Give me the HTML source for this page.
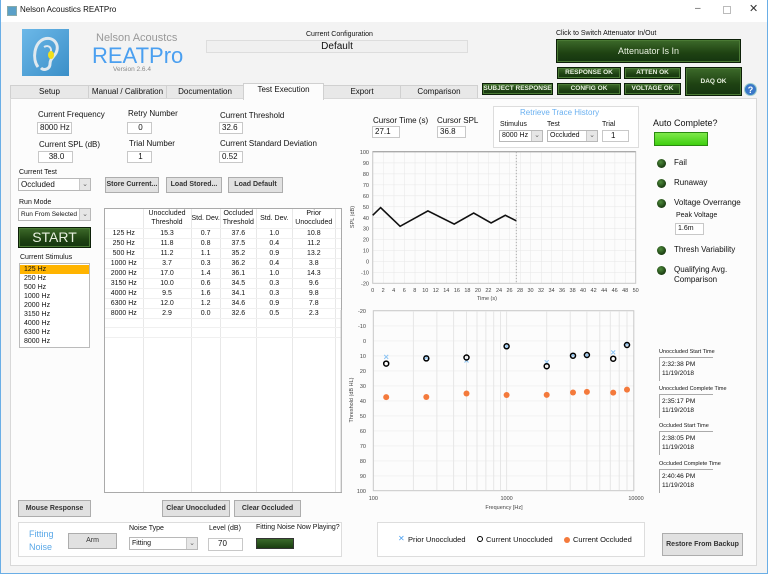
<!DOCTYPE html>
<html><head><meta charset="utf-8"><style>
*{margin:0;padding:0;box-sizing:border-box}
body{width:768px;height:574px;overflow:hidden;background:#f3f3f3;font-family:"Liberation Sans",sans-serif;color:#111;position:relative}
.a{position:absolute;white-space:nowrap}
.l{font-size:8px}
.box{position:absolute;background:#fff;border:1px solid #c8c8c8;font-size:8px;padding-left:2px;line-height:10px}
.btn{position:absolute;background:#e1e1e1;border:1px solid #adadad;font-size:7px;font-weight:bold;color:#333;text-align:center}
.gb{position:absolute;background:linear-gradient(#3d6a2a,#1e4212 60%,#153510);border:1px solid #0c1f08;color:#e8f0e0;font-size:6.5px;font-weight:bold;text-align:center;box-shadow:inset 0 0 0 1px #4a7a35}
.sel{position:absolute;background:#fff;border:1px solid #b8b8b8;font-size:8px;padding-left:2px;overflow:hidden}
.sel:after{content:"⌄";position:absolute;right:0;top:0;width:10px;height:100%;background:#e6e6e6;border-left:1px solid #c8c8c8;font-size:7px;text-align:center;color:#666}
.tab{position:absolute;top:85px;height:14px;background:#e8e8e8;border:1px solid #d0d0d0;font-size:8px;text-align:center;line-height:12px}
.led{position:absolute;width:9px;height:9px;border-radius:50%;background:radial-gradient(circle at 40% 35%,#4d8a3a,#1b3d12 70%)}
td{font-size:7px;text-align:center;height:9.6px;line-height:9px;border-right:1px solid #e8e8e8;border-bottom:1px solid #f0f0f0}
</style></head><body>
<div class="a" style="left:0;top:0;width:768px;height:22px;background:#fff"></div>
<div class="a" style="left:0;top:0;width:1px;height:574px;background:#6aaee6"></div>
<div class="a" style="left:767px;top:0;width:1px;height:574px;background:#6aaee6"></div>
<div class="a" style="left:0;top:573px;width:768px;height:1px;background:#6aaee6"></div>
<div class="a" style="left:7px;top:6px;width:10px;height:10px;background:#5aa0c8;border:1px solid #8aa"></div>
<div class="a" style="left:20px;top:5px;font-size:8px">Nelson Acoustics REATPro</div>
<div class="a" style="left:695px;top:3px;font-size:10px;color:#555">–</div>
<div class="a" style="left:723px;top:6px;width:8px;height:8px;border:1px solid #bbb"></div>
<div class="a" style="left:749px;top:2px;font-size:11px;color:#333">✕</div>
<div class="a" style="left:22px;top:29px;width:47px;height:47px;background:linear-gradient(135deg,#6cb8e8,#3b8fc8)"></div>
<svg class="a" style="left:22px;top:29px" width="47" height="47"><path d="M16 38 C10 30 12 14 22 10 C32 7 38 16 34 24 C31 29 28 30 28 35 C28 40 22 42 19 39" fill="none" stroke="#dfe9ef" stroke-width="3"/><path d="M22 18 C27 15 31 20 28 24" fill="none" stroke="#dfe9ef" stroke-width="2"/><ellipse cx="29" cy="26" rx="3" ry="4" fill="#f2e01a"/></svg>
<div class="a" style="left:96px;top:32px;font-size:11px;color:#999">Nelson Acoustcs</div>
<div class="a" style="left:92px;top:43px;font-size:22px;color:#4a9ff0">REATPro</div>
<div class="a" style="left:113px;top:66px;font-size:6.5px;color:#888">Version 2.6.4</div>
<div class="a l" style="left:306px;top:31px;font-size:7px">Current Configuration</div>
<div class="a" style="left:206px;top:40px;width:262px;height:13px;border:1px solid #ddd;background:#f0f0f0;font-size:10px;text-align:center;line-height:12px">Default</div>
<div class="a" style="left:556px;top:30px;font-size:7px">Click to Switch Attenuator In/Out</div>
<div class="gb" style="left:556px;top:39px;width:185px;height:24px;font-size:9px;font-weight:normal;line-height:22px">Attenuator Is In</div>
<div class="gb" style="left:557px;top:67px;width:64px;height:12px;line-height:10px">RESPONSE OK</div>
<div class="gb" style="left:624px;top:67px;width:57px;height:12px;line-height:10px">ATTEN OK</div>
<div class="gb" style="left:557px;top:83px;width:64px;height:12px;line-height:10px">CONFIG OK</div>
<div class="gb" style="left:624px;top:83px;width:57px;height:12px;line-height:10px">VOLTAGE OK</div>
<div class="gb" style="left:685px;top:67px;width:57px;height:29px;line-height:27px">DAQ OK</div>
<div class="gb" style="left:482px;top:83px;width:71px;height:12px;line-height:10px">SUBJECT RESPONSE</div>
<div class="a" style="left:744px;top:83px;width:13px;height:13px;border-radius:50%;background:#3a78c8;border:1px solid #9cc;color:#fff;font-size:9px;font-weight:bold;text-align:center;line-height:12px">?</div>
<div class="tab" style="left:10px;width:79px">Setup</div>
<div class="tab" style="left:88px;width:79px">Manual / Calibration</div>
<div class="tab" style="left:166px;width:78px">Documentation</div>
<div class="tab" style="left:323px;width:78px">Export</div>
<div class="tab" style="left:400px;width:78px">Comparison</div>
<div class="a" style="left:10px;top:98px;width:747px;height:468px;background:#fcfcfc;border:1px solid #d8d8d8"></div>
<div class="tab" style="left:243px;top:83px;height:17px;width:81px;background:#fcfcfc;border-bottom:none">Test Execution</div>
<div class="a l" style="left:38px;top:110px">Current Frequency</div>
<div class="box" style="left:37px;top:122px;width:35px;height:12px">8000 Hz</div>
<div class="a l" style="left:128px;top:109px">Retry Number</div>
<div class="box" style="left:127px;top:122px;width:25px;height:12px;text-align:center">0</div>
<div class="a l" style="left:220px;top:111px">Current Threshold</div>
<div class="box" style="left:219px;top:122px;width:24px;height:12px">32.6</div>
<div class="a l" style="left:39px;top:140px">Current SPL (dB)</div>
<div class="box" style="left:38px;top:151px;width:35px;height:12px;text-align:center">38.0</div>
<div class="a l" style="left:129px;top:139px">Trial Number</div>
<div class="box" style="left:127px;top:151px;width:25px;height:12px;text-align:center">1</div>
<div class="a l" style="left:220px;top:139px">Current Standard Deviation</div>
<div class="box" style="left:219px;top:151px;width:24px;height:12px">0.52</div>
<div class="a" style="left:19px;top:169px;font-size:7px">Current Test</div>
<div class="sel" style="left:18px;top:178px;width:73px;height:13px;line-height:11px">Occluded</div>
<div class="btn" style="left:105px;top:177px;width:54px;height:16px;line-height:14px">Store Current...</div>
<div class="btn" style="left:166px;top:177px;width:56px;height:16px;line-height:14px">Load Stored...</div>
<div class="btn" style="left:228px;top:177px;width:55px;height:16px;line-height:14px">Load Default</div>
<div class="a" style="left:19px;top:199px;font-size:7px">Run Mode</div>
<div class="sel" style="left:18px;top:208px;width:73px;height:13px;line-height:11px;font-size:6.5px">Run From Selected</div>
<div class="gb" style="left:18px;top:227px;width:73px;height:21px;font-size:14px;font-weight:normal;line-height:19px">START</div>
<div class="a" style="left:20px;top:254px;font-size:7px">Current Stimulus</div>
<div class="a" style="left:19px;top:263px;width:71px;height:85px;background:#fff;border:1px solid #bbb;font-size:7px;line-height:9px;padding-top:1px">
<div style="background:#ffb400;padding-left:4px">125 Hz</div><div style="padding-left:4px">250 Hz</div><div style="padding-left:4px">500 Hz</div><div style="padding-left:4px">1000 Hz</div><div style="padding-left:4px">2000 Hz</div><div style="padding-left:4px">3150 Hz</div><div style="padding-left:4px">4000 Hz</div><div style="padding-left:4px">6300 Hz</div><div style="padding-left:4px">8000 Hz</div></div>
<div class="a" style="left:104px;top:208px;width:238px;height:285px;background:#fff;border:1px solid #aaa;overflow:hidden">
<table style="border-collapse:collapse;width:238px">
<tr><td style="width:38px;height:19px"></td><td style="width:48px;height:19px">Unoccluded<br>Threshold</td><td style="width:29px">Std. Dev.</td><td style="width:36px">Occluded<br>Threshold</td><td style="width:36px">Std. Dev.</td><td style="width:43px">Prior<br>Unoccluded</td><td></td></tr>
<tr><td>125 Hz</td><td>15.3</td><td>0.7</td><td>37.6</td><td>1.0</td><td>10.8</td><td></td></tr>
<tr><td>250 Hz</td><td>11.8</td><td>0.8</td><td>37.5</td><td>0.4</td><td>11.2</td><td></td></tr>
<tr><td>500 Hz</td><td>11.2</td><td>1.1</td><td>35.2</td><td>0.9</td><td>13.2</td><td></td></tr>
<tr><td>1000 Hz</td><td>3.7</td><td>0.3</td><td>36.2</td><td>0.4</td><td>3.8</td><td></td></tr>
<tr><td>2000 Hz</td><td>17.0</td><td>1.4</td><td>36.1</td><td>1.0</td><td>14.3</td><td></td></tr>
<tr><td>3150 Hz</td><td>10.0</td><td>0.6</td><td>34.5</td><td>0.3</td><td>9.6</td><td></td></tr>
<tr><td>4000 Hz</td><td>9.5</td><td>1.6</td><td>34.1</td><td>0.3</td><td>9.8</td><td></td></tr>
<tr><td>6300 Hz</td><td>12.0</td><td>1.2</td><td>34.6</td><td>0.9</td><td>7.8</td><td></td></tr>
<tr><td>8000 Hz</td><td>2.9</td><td>0.0</td><td>32.6</td><td>0.5</td><td>2.3</td><td></td></tr>
<tr><td></td><td></td><td></td><td></td><td></td><td></td><td></td></tr>
<tr><td></td><td></td><td></td><td></td><td></td><td></td><td></td></tr>
<tr><td style="height:200px"></td><td></td><td></td><td></td><td></td><td></td><td></td></tr>
</table></div>
<div class="btn" style="left:18px;top:500px;width:73px;height:17px;line-height:15px">Mouse Response</div>
<div class="btn" style="left:162px;top:500px;width:68px;height:17px;line-height:15px">Clear Unoccluded</div>
<div class="btn" style="left:234px;top:500px;width:67px;height:17px;line-height:15px">Clear Occluded</div>
<div class="a" style="left:18px;top:522px;width:324px;height:35px;border:1px solid #ddd;background:#fff"></div>
<div class="a" style="left:29px;top:528px;font-size:9px;color:#5aa8e8;line-height:13px">Fitting<br>Noise</div>
<div class="btn" style="left:68px;top:533px;width:49px;height:16px;line-height:14px;font-weight:normal">Arm</div>
<div class="a" style="left:129px;top:525px;font-size:7px">Noise Type</div>
<div class="sel" style="left:129px;top:537px;width:69px;height:13px;font-size:7px;line-height:11px">Fitting</div>
<div class="a" style="left:209px;top:525px;font-size:7px">Level  (dB)</div>
<div class="box" style="left:208px;top:538px;width:35px;height:13px;text-align:center;padding-right:8px">70</div>
<div class="a" style="left:256px;top:524px;font-size:7px">Fitting Noise Now Playing?</div>
<div class="a" style="left:256px;top:538px;width:38px;height:11px;background:linear-gradient(#3a6a2a,#1a3e10);border:1px solid #333"></div>
<div class="a l" style="left:373px;top:116px">Cursor Time (s)</div>
<div class="box" style="left:372px;top:126px;width:28px;height:12px">27.1</div>
<div class="a l" style="left:437px;top:116px">Cursor SPL</div>
<div class="box" style="left:437px;top:126px;width:29px;height:12px">36.8</div>
<div class="a" style="left:493px;top:106px;width:146px;height:42px;border:1px solid #ddd;background:#fff"></div>
<div class="a" style="left:520px;top:108px;font-size:8px;color:#6ab0f0">Retrieve Trace History</div>
<div class="a" style="left:500px;top:121px;font-size:7px">Stimulus</div>
<div class="a" style="left:547px;top:121px;font-size:7px">Test</div>
<div class="a" style="left:602px;top:121px;font-size:7px">Trial</div>
<div class="sel" style="left:499px;top:130px;width:44px;height:12px;font-size:7px;line-height:10px">8000 Hz</div>
<div class="sel" style="left:547px;top:130px;width:51px;height:12px;font-size:7px;line-height:10px">Occluded</div>
<div class="box" style="left:602px;top:130px;width:27px;height:12px;line-height:10px;padding-left:8px">1</div>
<div class="a l" style="left:653px;top:118px;font-size:9px">Auto Complete?</div>
<div class="a" style="left:654px;top:132px;width:54px;height:14px;background:linear-gradient(#7ee84a,#3fcf10);border:1px solid #2a8a10"></div>
<div class="led" style="left:657px;top:159px"></div><div class="a l" style="left:674px;top:158px">Fail</div>
<div class="led" style="left:657px;top:179px"></div><div class="a l" style="left:674px;top:178px">Runaway</div>
<div class="led" style="left:657px;top:199px"></div><div class="a l" style="left:674px;top:198px">Voltage Overrange</div>
<div class="a" style="left:676px;top:212px;font-size:7px">Peak Voltage</div>
<div class="box" style="left:675px;top:223px;width:29px;height:12px;font-size:7px">1.6m</div>
<div class="led" style="left:657px;top:246px"></div><div class="a l" style="left:674px;top:245px">Thresh Variability</div>
<div class="led" style="left:657px;top:266px"></div><div class="a l" style="left:674px;top:265px;line-height:10px">Qualifying Avg.<br>Comparison</div>
<div class="a" style="left:659px;top:349px;font-size:5.5px">Unoccluded Start Time</div>
<div class="a" style="left:659px;top:357px;width:54px;height:24px;border-top:1px solid #aaa;border-left:1px solid #aaa;font-size:6.5px;line-height:9px;padding:2px 0 0 2px">2:32:38 PM<br>11/19/2018</div>
<div class="a" style="left:659px;top:386px;font-size:5.5px">Unoccluded Complete Time</div>
<div class="a" style="left:659px;top:394px;width:54px;height:24px;border-top:1px solid #aaa;border-left:1px solid #aaa;font-size:6.5px;line-height:9px;padding:2px 0 0 2px">2:35:17 PM<br>11/19/2018</div>
<div class="a" style="left:659px;top:423px;font-size:5.5px">Occluded Start Time</div>
<div class="a" style="left:659px;top:431px;width:54px;height:24px;border-top:1px solid #aaa;border-left:1px solid #aaa;font-size:6.5px;line-height:9px;padding:2px 0 0 2px">2:38:05 PM<br>11/19/2018</div>
<div class="a" style="left:659px;top:461px;font-size:5.5px">Occluded Complete Time</div>
<div class="a" style="left:659px;top:469px;width:54px;height:24px;border-top:1px solid #aaa;border-left:1px solid #aaa;font-size:6.5px;line-height:9px;padding:2px 0 0 2px">2:40:46 PM<br>11/19/2018</div>
<div class="btn" style="left:662px;top:533px;width:81px;height:23px;line-height:21px">Restore From Backup</div>
<div class="a" style="left:377px;top:522px;width:268px;height:35px;border:1px solid #ddd;background:#fff"></div>
<div class="a" style="left:398px;top:534px;font-size:8px;color:#4a9ff0">✕</div>
<div class="a" style="left:408px;top:535px;font-size:7.5px">Prior Unoccluded</div>
<div class="a" style="left:477px;top:536px;width:6px;height:6px;border:1.5px solid #000;border-radius:50%"></div>
<div class="a" style="left:486px;top:535px;font-size:7.5px">Current Unoccluded</div>
<div class="a" style="left:564px;top:537px;width:6px;height:6px;background:#f47a3c;border-radius:50%"></div>
<div class="a" style="left:573px;top:535px;font-size:7.5px">Current Occluded</div>
<svg class="a" style="left:0;top:0" width="768" height="574" font-family="Liberation Sans, sans-serif">
<defs>
<pattern id="g1" x="372.7" y="151.7" width="10.52" height="10.97" patternUnits="userSpaceOnUse"><path d="M0 0H10.52M0 0V10.97" stroke="#e6e6e6" stroke-width="1" fill="none"/></pattern>
<pattern id="g2" x="373.3" y="310.7" width="300" height="15" patternUnits="userSpaceOnUse"><path d="M0 0H300" stroke="#e6e6e6" fill="none"/></pattern>
</defs>
<rect x="372.7" y="151.7" width="263" height="131.6" fill="url(#g1)" stroke="#c8c8c8"/>
<line x1="372.7" y1="151.7" x2="635.7" y2="151.7" stroke="#999"/>
<line x1="516.3" y1="151.7" x2="516.3" y2="283.3" stroke="#aaa" stroke-dasharray="1.5,1.5"/>
<polyline points="372.7,215.3 380.6,207.6 400.1,226.3 427.9,210.9 454.2,224.1 473.7,213.1 491.1,223 505.3,215.3 516.3,220.8" fill="none" stroke="#111" stroke-width="1.6"/>
<g font-size="5.5" fill="#444" text-anchor="end">
<text x="369" y="154">100</text><text x="369" y="165">90</text><text x="369" y="176">80</text><text x="369" y="187">70</text><text x="369" y="198">60</text><text x="369" y="209">50</text><text x="369" y="220">40</text><text x="369" y="230.5">30</text><text x="369" y="241.5">20</text><text x="369" y="252.5">10</text><text x="369" y="263.5">0</text><text x="369" y="274.5">-10</text><text x="369" y="285.5">-20</text></g>
<g font-size="5.5" fill="#444" text-anchor="middle">
<text x="372.7" y="292">0</text><text x="383.2" y="292">2</text><text x="393.7" y="292">4</text><text x="404.3" y="292">6</text><text x="414.8" y="292">8</text><text x="425.3" y="292">10</text><text x="435.8" y="292">12</text><text x="446.3" y="292">14</text><text x="456.9" y="292">16</text><text x="467.4" y="292">18</text><text x="477.9" y="292">20</text><text x="488.4" y="292">22</text><text x="499" y="292">24</text><text x="509.5" y="292">26</text><text x="520" y="292">28</text><text x="530.5" y="292">30</text><text x="541" y="292">32</text><text x="551.6" y="292">34</text><text x="562.1" y="292">36</text><text x="572.6" y="292">38</text><text x="583.1" y="292">40</text><text x="593.6" y="292">42</text><text x="604.2" y="292">44</text><text x="614.7" y="292">46</text><text x="625.2" y="292">48</text><text x="635.7" y="292">50</text>
<text x="487" y="300">Time (s)</text></g>
<text x="354" y="217" font-size="5.5" fill="#444" transform="rotate(-90 354 217)" text-anchor="middle">SPL (dB)</text>
<line x1="341" y1="310" x2="341" y2="492" stroke="#ccc"/>
<rect x="373.3" y="310.7" width="260.5" height="180" fill="url(#g2)" stroke="#c8c8c8"/>
<g stroke="#e6e6e6"><path d="M413.4 311V490M436.9 311V490M453.6 311V490M466.5 311V490M477 311V490M485.9 311V490M493.7 311V490M500.5 311V490M506.6 311V490M546.7 311V490M570.2 311V490M586.9 311V490M599.8 311V490M610.3 311V490M619.2 311V490M627 311V490"/></g>
<g font-size="5.5" fill="#444" text-anchor="end">
<text x="366" y="313">-20</text><text x="366" y="328">-10</text><text x="366" y="343">0</text><text x="366" y="358">10</text><text x="366" y="373">20</text><text x="366" y="388">30</text><text x="366" y="403">40</text><text x="366" y="418">50</text><text x="366" y="433">60</text><text x="366" y="448">70</text><text x="366" y="463">80</text><text x="366" y="478">90</text><text x="366" y="493">100</text></g>
<g font-size="5.5" fill="#444" text-anchor="middle"><text x="373.3" y="500">100</text><text x="506.6" y="500">1000</text><text x="636" y="500">10000</text><text x="504" y="509">Frequency [Hz]</text></g>
<text x="353" y="400" font-size="5.5" fill="#444" transform="rotate(-90 353 400)" text-anchor="middle">Threshold (dB HL)</text>
<g stroke="#8cc4f4" stroke-width="1"><path d="M384.2 354.9l4 4m0-4l-4 4M424.3 355.5l4 4m0-4l-4 4M464.5 358.5l4 4m0-4l-4 4M504.6 344.4l4 4m0-4l-4 4M544.7 360.2l4 4m0-4l-4 4M571 353.1l4 4m0-4l-4 4M584.9 353.4l4 4m0-4l-4 4M611.2 350.4l4 4m0-4l-4 4M625 342.1l4 4m0-4l-4 4"/></g>
<g fill="none" stroke="#000" stroke-width="1.5"><circle cx="386.2" cy="363.6" r="2.5"/><circle cx="426.3" cy="358.4" r="2.5"/><circle cx="466.5" cy="357.5" r="2.5"/><circle cx="506.6" cy="346.3" r="2.5"/><circle cx="546.7" cy="366.2" r="2.5"/><circle cx="573" cy="355.7" r="2.5"/><circle cx="586.9" cy="355" r="2.5"/><circle cx="613.2" cy="358.7" r="2.5"/><circle cx="627" cy="345" r="2.5"/></g>
<g fill="#f47a3c"><circle cx="386.2" cy="397.1" r="3"/><circle cx="426.3" cy="397" r="3"/><circle cx="466.5" cy="393.5" r="3"/><circle cx="506.6" cy="395" r="3"/><circle cx="546.7" cy="394.9" r="3"/><circle cx="573" cy="392.5" r="3"/><circle cx="586.9" cy="391.9" r="3"/><circle cx="613.2" cy="392.6" r="3"/><circle cx="627" cy="389.6" r="3"/></g>
</svg>
</body></html>
